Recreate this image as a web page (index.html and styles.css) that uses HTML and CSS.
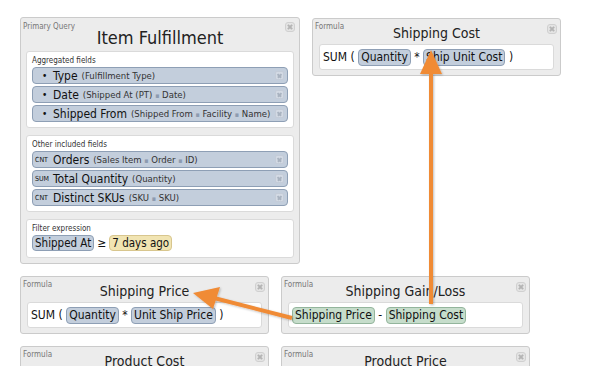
FILE: index.html
```html
<!DOCTYPE html>
<html lang="en">
<head>
    <meta charset="UTF-8" />
    <title>Query Builder</title>
    <link rel="stylesheet" href="styles.css">
</head>
<body>
    <div class="page">
        <div class="row top-row">
            <div class="panel primary">
                <div class="panel-head">
                    <span class="kind">Primary Query</span>
                    <span class="title">Item Fulfillment</span>
                    <span class="close"></span>
                </div>

                <div class="section">
                    <div class="section-label">Aggregated fields</div>
                    <div class="chip field"><span class="lead">&bull;</span><span class="name">Type</span><span class="path">(Fulfillment Type)</span><span class="chip-x"></span></div>
                    <div class="chip field"><span class="lead">&bull;</span><span class="name">Date</span><span class="path">(Shipped At (PT) <i>&#9642;</i> Date)</span><span class="chip-x"></span></div>
                    <div class="chip field"><span class="lead">&bull;</span><span class="name">Shipped From</span><span class="path">(Shipped From <i>&#9642;</i> Facility <i>&#9642;</i> Name)</span><span class="chip-x"></span></div>
                </div>

                <div class="section">
                    <div class="section-label">Other included fields</div>
                    <div class="chip field"><span class="lead agg">cnt</span><span class="name">Orders</span><span class="path">(Sales Item <i>&#9642;</i> Order <i>&#9642;</i> ID)</span><span class="chip-x"></span></div>
                    <div class="chip field"><span class="lead agg">sum</span><span class="name">Total Quantity</span><span class="path">(Quantity)</span><span class="chip-x"></span></div>
                    <div class="chip field"><span class="lead agg">cnt</span><span class="name">Distinct SKUs</span><span class="path">(SKU <i>&#9642;</i> SKU)</span><span class="chip-x"></span></div>
                </div>

                <div class="section filter">
                    <div class="section-label">Filter expression</div>
                    <div class="expr">
                        <span class="chip tag">Shipped At</span>
                        <span class="op">&ge;</span>
                        <span class="chip tag value">7 days ago</span>
                    </div>
                </div>
            </div>

            <div class="panel formula cost">
                <div class="panel-head">
                    <span class="kind">Formula</span>
                    <span class="title">Shipping Cost</span>
                    <span class="close"></span>
                </div>
                <div class="expr-box">
                    SUM ( <span class="chip tag">Quantity</span> * <span class="chip tag">Ship Unit Cost</span> )
                </div>
            </div>
        </div>

        <div class="row">
            <div class="panel formula">
                <div class="panel-head">
                    <span class="kind">Formula</span>
                    <span class="title">Shipping Price</span>
                    <span class="close"></span>
                </div>
                <div class="expr-box">
                    SUM ( <span class="chip tag">Quantity</span> * <span class="chip tag">Unit Ship Price</span> )
                </div>
            </div>
            <div class="panel formula">
                <div class="panel-head">
                    <span class="kind">Formula</span>
                    <span class="title">Shipping Gain/Loss</span>
                    <span class="close"></span>
                </div>
                <div class="expr-box">
                    <span class="chip tag green">Shipping Price</span> - <span class="chip tag green">Shipping Cost</span>
                </div>
            </div>
        </div>

        <div class="row">
            <div class="panel formula">
                <div class="panel-head">
                    <span class="kind">Formula</span>
                    <span class="title">Product Cost</span>
                    <span class="close"></span>
                </div>
                <div class="expr-box">&nbsp;</div>
            </div>
            <div class="panel formula">
                <div class="panel-head">
                    <span class="kind">Formula</span>
                    <span class="title">Product Price</span>
                    <span class="close"></span>
                </div>
                <div class="expr-box">&nbsp;</div>
            </div>
        </div>
    </div>

    <!-- callout arrows drawn over the panels -->
    <svg class="arrows" width="590" height="366" viewBox="0 0 590 366">
        <defs>
            <filter id="shade" x="-20%" y="-20%" width="140%" height="140%">
                <feDropShadow dx="1" dy="1" stdDeviation="1" flood-color="#000" flood-opacity="0.25"/>
            </filter>
        </defs>
        <g fill="#f08b36" stroke="#f08b36" filter="url(#shade)">
            <line x1="431" y1="304" x2="431" y2="70" stroke-width="4"/>
            <polygon points="431,50 420,74 442,74" stroke="none"/>
            <line x1="292" y1="318" x2="214" y2="298" stroke-width="4"/>
            <polygon points="193,293 220,287 213,309" stroke="none"/>
        </g>
    </svg>
</body>
</html>
```

FILE: styles.css
```css
body {
    margin: 0;
    background: #fff;
    font-family: "DejaVu Sans Condensed", "DejaVu Sans", sans-serif;
    font-stretch: condensed;
    color: #111;
    overflow: hidden;
}
.page {
    padding: 17px 0 0 20px;
}
.row {
    display: flex;
    gap: 12px;
    margin-top: 12px;
    align-items: flex-start;
}
.top-row {
    margin-top: 0;
}
.panel {
    background: #ececec;
    border: 1px solid #cbcbcb;
    border-radius: 3px;
    box-sizing: border-box;
}
.primary {
    width: 280px;
    padding: 4px 5px 5px;
}
.formula {
    width: 249px;
    padding: 3px 6px 5px;
}
.cost {
    margin-top: 1px;
}
.panel-head {
    display: grid;
    grid-template-columns: 1fr auto 1fr;
    align-items: start;
}
.kind {
    font-size: 8px;
    line-height: 10px;
    color: #777;
    margin-left: -4px;
}
.primary .kind {
    margin-left: -3px;
}
.title {
    font-size: 14px;
    line-height: 17px;
    color: #222;
    margin-top: 3px;
}
.primary .title {
    font-size: 18px;
    line-height: 22px;
    margin-top: 5px;
}
.close {
    position: relative;
    justify-self: end;
    width: 8px;
    height: 8px;
    margin: 2px -3px 0 0;
    border: 1px solid #d0d0d0;
    border-radius: 3px;
    background: #e4e4e4;
}
.primary .close {
    margin: 0 -1px 0 0;
}
.close::before,
.close::after,
.chip-x::before,
.chip-x::after {
    content: "";
    position: absolute;
    left: 1px;
    right: 1px;
    top: 50%;
    height: 2px;
    margin-top: -1px;
    background: #b4b4b4;
    transform: rotate(45deg);
}
.close::after,
.chip-x::after {
    transform: rotate(-45deg);
}
.section {
    background: #fff;
    border: 1px solid #dadada;
    border-radius: 3px;
    padding: 4px 5px 5px;
    margin-top: 2px;
}
.section + .section {
    margin-top: 7px;
}
.section-label {
    font-size: 8px;
    line-height: 10px;
    color: #333;
    margin-bottom: 1px;
}
.chip {
    background: #c3cedc;
    border: 1px solid #8e9fb5;
    border-radius: 4px;
    box-sizing: border-box;
}
.field {
    display: flex;
    align-items: center;
    height: 17px;
    padding: 0 3px 0 0;
    white-space: nowrap;
}
.field + .field {
    margin-top: 2px;
}
.lead {
    width: 20px;
    padding-left: 9px;
    box-sizing: border-box;
    font-size: 10px;
}
.agg {
    padding-left: 2px;
    font-size: 7px;
    text-transform: uppercase;
    margin-top: 1px;
}
.name {
    font-size: 12px;
}
.path {
    font-size: 9.5px;
    color: #333;
    margin-left: 4px;
}
.path i {
    font-style: normal;
    font-size: 7px;
    color: #8d9bb0;
}
.chip-x {
    position: relative;
    margin-left: auto;
    width: 7px;
    height: 7px;
    border: 1px solid #c4ccd8;
    border-radius: 2px;
    background: #d3dae4;
}
.chip-x::before,
.chip-x::after {
    background: #a9b3c0;
    height: 1.5px;
}
.filter {
    padding-bottom: 6px;
}
.expr {
    display: flex;
    align-items: center;
    gap: 3px;
    font-size: 12px;
}
.tag {
    display: inline-block;
    font-size: 12px;
    padding: 0 2px;
    line-height: 15px;
}
.expr .tag {
    font-size: 11.5px;
    line-height: 14px;
}
.value {
    background: #f1e4b2;
    border-color: #d8c68e;
}
.green {
    background: #c6ddcb;
    border-color: #93b59c;
}
.expr-box {
    background: #fff;
    border: 1px solid #dadada;
    border-radius: 3px;
    margin-top: 2px;
    padding: 3px 3px;
    font-size: 12px;
    line-height: 18px;
    height: 26px;
    box-sizing: border-box;
    white-space: nowrap;
}
.arrows {
    position: absolute;
    top: 0;
    left: 0;
    pointer-events: none;
}
```
